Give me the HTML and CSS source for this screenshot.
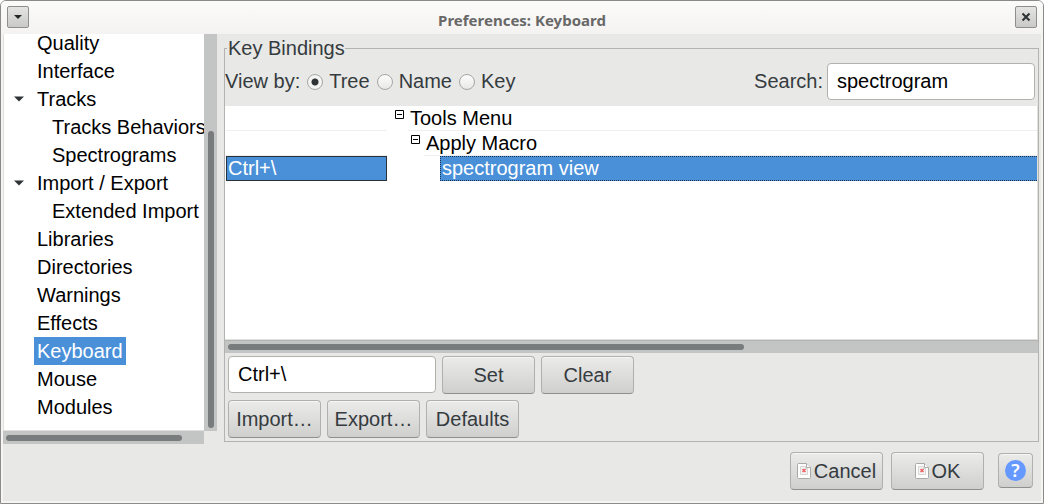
FILE: index.html
```html
<!DOCTYPE html>
<html lang="en">
<head>
<meta charset="utf-8">
<title>Preferences: Keyboard</title>
<link rel="stylesheet" href="styles.css">
</head>
<body>
<div class="window">
  <header class="titlebar">
    <button class="title-button" type="button" aria-label="Window menu">
      <svg width="10" height="6" viewBox="0 0 10 6"><path d="M1 1h8L5 5z" fill="#222828"/></svg>
    </button>
    <h1 class="title">Preferences: Keyboard</h1>
    <button class="title-button" type="button" aria-label="Close">
      <svg width="10" height="10" viewBox="0 0 10 10"><path d="M1.5 1.5l7 7M8.5 1.5l-7 7" stroke="#2e3436" stroke-width="2.1" fill="none"/></svg>
    </button>
  </header>

  <main class="content">
    <nav class="sidebar">
      <ul class="tree">
        <li class="node"><span class="name">Quality</span></li>
        <li class="node"><span class="name">Interface</span></li>
        <li class="node"><svg class="arrow" width="10" height="6" viewBox="0 0 10 6"><path d="M0 .5h10l-5 5z"/></svg><span class="name">Tracks</span></li>
        <li class="node child"><span class="name">Tracks Behaviors</span></li>
        <li class="node child"><span class="name">Spectrograms</span></li>
        <li class="node"><svg class="arrow" width="10" height="6" viewBox="0 0 10 6"><path d="M0 .5h10l-5 5z"/></svg><span class="name">Import / Export</span></li>
        <li class="node child"><span class="name">Extended Import</span></li>
        <li class="node"><span class="name">Libraries</span></li>
        <li class="node"><span class="name">Directories</span></li>
        <li class="node"><span class="name">Warnings</span></li>
        <li class="node"><span class="name">Effects</span></li>
        <li class="node"><span class="name selected">Keyboard</span></li>
        <li class="node"><span class="name">Mouse</span></li>
        <li class="node"><span class="name">Modules</span></li>
      </ul>
      <div class="scroll-v"><div class="thumb"></div></div>
      <div class="scroll-h"><div class="thumb"></div></div>
    </nav>

    <fieldset class="group">
      <legend>Key Bindings</legend>
      <div class="group-body">
        <div class="filters">
          <div class="view-by" role="radiogroup" aria-labelledby="view-by">
            <span id="view-by">View by:</span>
            <label class="option"><input type="radio" name="view" checked>Tree</label>
            <label class="option"><input type="radio" name="view">Name</label>
            <label class="option"><input type="radio" name="view">Key</label>
          </div>
          <label for="search">Search:</label>
          <input class="field search" id="search" type="text" value="spectrogram">
        </div>

        <div class="bindings">
          <table class="grid">
            <tbody>
              <tr>
                <td class="shortcut"></td>
                <td><div class="item level-1"><svg class="toggle" width="9" height="9" viewBox="0 0 9 9"><path d="M.5.5h8v8h-8zM2 4.5h5"/></svg><span class="command">Tools Menu</span></div></td>
              </tr>
              <tr>
                <td class="shortcut"></td>
                <td><div class="item level-2"><svg class="toggle" width="9" height="9" viewBox="0 0 9 9"><path d="M.5.5h8v8h-8zM2 4.5h5"/></svg><span class="command">Apply Macro</span></div></td>
              </tr>
              <tr>
                <td class="shortcut current">Ctrl+\</td>
                <td><div class="item level-3"><span class="command current">spectrogram view</span></div></td>
              </tr>
            </tbody>
          </table>
        </div>
        <div class="scroll-h bindings-scroll"><div class="thumb"></div></div>

        <div class="actions">
          <input class="field binding" type="text" value="Ctrl+\" aria-label="Short cut">
          <button class="button" type="button">Set</button>
          <button class="button" type="button">Clear</button>
        </div>
        <div class="actions">
          <button class="button" type="button">Import…</button>
          <button class="button" type="button">Export…</button>
          <button class="button" type="button">Defaults</button>
        </div>
      </div>
    </fieldset>
  </main>

  <footer class="footer">
    <button class="button" type="button">
      <svg width="14" height="16" viewBox="0 0 14 16"><path d="M1.5.5h8l4 4v10a1 1 0 0 1-1 1h-11a1 1 0 0 1-1-1v-13a1 1 0 0 1 1-1z" fill="#fdfdfd" stroke="#a9aaa8"/><path d="M9.500.5v4h4" fill="#fff" stroke="#a9aaa8"/><path d="M3.500 3.500h5v2h2v6h-7z" fill="#f4f4f4" stroke="#d6d7d5"/><path d="M5.500 6l3 3M8.500 6l-3 3" stroke="#ee6468" stroke-width="1.600"/></svg>Cancel</button>
    <button class="button" type="button">
      <svg width="14" height="16" viewBox="0 0 14 16"><path d="M1.5.5h8l4 4v10a1 1 0 0 1-1 1h-11a1 1 0 0 1-1-1v-13a1 1 0 0 1 1-1z" fill="#fdfdfd" stroke="#a9aaa8"/><path d="M9.500.5v4h4" fill="#fff" stroke="#a9aaa8"/><path d="M3.500 3.500h5v2h2v6h-7z" fill="#f4f4f4" stroke="#d6d7d5"/><path d="M5.500 6l3 3M8.500 6l-3 3" stroke="#ee6468" stroke-width="1.600"/></svg>OK</button>
    <button class="button help" type="button" aria-label="Help"><span class="help-mark">?</span></button>
  </footer>
</div>
</body>
</html>
```
FILE: styles.css
```css
* {
  box-sizing: border-box;
}

body {
  margin: 0;
  background: #fff;
  color: #353b3f;
  font: 20px/28px "Liberation Sans", Arial, sans-serif;
}

button,
input {
  margin: 0;
  color: inherit;
  font: inherit;
}

svg {
  flex: none;
}

.window {
  display: flex;
  flex-direction: column;
  height: 100vh;
  border: 1px solid #8b8b8b;
  border-radius: 6px 6px 0 0;
  background: #f5f4f2;
  overflow: hidden;
}

.titlebar {
  display: flex;
  flex: none;
  align-items: center;
  height: 33px;
  padding: 0 6px;
  background: linear-gradient(#fbfbfa, #f4f3f1);
}

.title {
  flex: 1;
  margin: 0;
  padding-top: 4px;
  color: #686868;
  font: bold 15px/20px "Noto Sans", "Open Sans", sans-serif;
  text-align: center;
}

.title-button {
  display: flex;
  align-items: center;
  justify-content: center;
  width: 22px;
  height: 22px;
  margin-bottom: 1px;
  padding: 0;
  border: 1px solid #8e8e8c;
  border-radius: 2px;
  background: linear-gradient(#e4e4e2, #c9c9c7);
}

.content {
  display: flex;
  flex: 1;
  gap: 7px;
  min-height: 0;
  margin: 0 2px;
  padding-right: 2px;
  background: #e8e8e6;
}

.sidebar {
  display: grid;
  flex: none;
  grid-template: minmax(0, 1fr) 13px / minmax(0, 1fr) 13px;
  width: 214px;
}

.tree {
  display: flex;
  flex-direction: column;
  justify-content: flex-end;
  margin: 0;
  padding: 0 0 9px 30px;
  border: 1px solid #e0e0de;
  border-width: 0 0 1px 1px;
  background: #fff;
  color: #000;
  list-style: none;
  overflow: hidden;
}

.node {
  display: flex;
  flex: none;
  align-items: center;
  white-space: nowrap;
}

.arrow {
  margin: 0 10px 0 -20px;
  fill: #2e3436;
}

.child {
  padding-left: 15px;
}

.name {
  padding: 0 3px;
}

.selected {
  background: #4a90d9;
  color: #fff;
}

.scroll-v {
  display: flex;
  align-items: flex-end;
  padding: 3px 3px 3px 4px;
  background: #c2c5c3;
}

.scroll-h {
  padding: 4px 3px 3px;
  background: #c2c5c3;
}

.thumb {
  width: 90%;
  height: 6px;
  border-radius: 3px;
  background: #797c7c;
}

.scroll-v .thumb {
  width: 6px;
  height: 76%;
}

.group {
  display: flex;
  flex: 1;
  flex-direction: column;
  min-width: 0;
  margin: 0 0 2px;
  padding: 0;
  border: 1px solid #b3b4b2;
}

legend {
  margin-left: 2px;
  padding: 0 0 0 1px;
}

.group-body {
  display: flex;
  flex-direction: column;
  height: 100%;
}

.filters {
  display: flex;
  align-items: center;
  gap: 4px;
  padding: 1px 3px 6px 0;
}

.filters label,
.filters span {
  line-height: 26px;
}

.filters > label,
.view-by {
  padding-bottom: 2px;
}

.view-by {
  display: flex;
  flex: 1;
  align-items: center;
  gap: 7px;
  white-space: nowrap;
}

.option {
  display: flex;
  align-items: center;
  gap: 6px;
}

.option input {
  width: 16px;
  height: 16px;
  margin-top: 2px;
  border: 1px solid #a6a8a5;
  border-radius: 50%;
  background: linear-gradient(#fdfdfd, #e8e8e6);
  appearance: none;
}

.option input:checked {
  background: radial-gradient(circle, #2e3436 3px, #f4f4f3 4px);
}

.field {
  height: 37px;
  padding: 0 9px;
  border: 1px solid #b1b2ac;
  border-radius: 4px;
  background: #fff;
  color: #000;
}

.search,
.binding {
  width: 208px;
}

.bindings {
  flex: 1;
  min-height: 0;
  padding-left: 1px;
  border: 1px solid #e0e0de;
  border-width: 0 1px 1px 0;
  background: #fff;
  overflow: hidden;
}

.grid {
  width: 100%;
  border-collapse: collapse;
  table-layout: fixed;
  color: #000;
  line-height: 24px;
}

.grid td {
  height: 25px;
  padding: 0;
}

.grid .shortcut {
  width: 161px;
  padding: 0 2px;
  box-shadow: inset 0 -1px #efefef;
  vertical-align: top;
}

.grid .shortcut.current {
  background: #4a90d9;
  box-shadow: inset 0 0 0 1px #263238;
  color: #fff;
}

.item {
  display: flex;
  gap: 4px;
  padding-left: 8px;
}

.level-2 {
  padding-left: 24px;
}

.level-3 {
  padding-left: 53px;
}

.toggle {
  margin-top: 4px;
  fill: none;
  stroke: #000;
}

.command {
  flex: 1;
  height: 25px;
  padding-left: 2px;
  box-shadow: inset 0 -1px #efefef;
}

.command.current {
  padding-left: 1px;
  border: 1px dotted #1c3350;
  border-right: 0;
  background: #4a90d9;
  box-shadow: none;
  color: #fff;
  line-height: 22px;
}

.bindings-scroll {
  flex: none;
  border-top: 1px solid #b3b4b2;
  padding-top: 3px;
}

.bindings-scroll .thumb {
  width: 64%;
}

.actions {
  display: flex;
  gap: 6px;
  padding: 3px;
}

.button {
  display: flex;
  align-items: center;
  justify-content: center;
  gap: 3px;
  min-width: 93px;
  height: 38px;
  padding: 0 5px;
  border: 1px solid #b0b1af;
  border-bottom-color: #8e908d;
  border-radius: 4px;
  background: linear-gradient(#ebebea, #cfcfce);
  box-shadow: inset 0 1px #f6f6f5;
}

.footer {
  display: flex;
  flex: none;
  align-items: center;
  justify-content: flex-end;
  gap: 8px;
  margin: 0 2px 2px;
  padding: 8px 8px 11px;
  background: #e8e8e6;
}

.button.help {
  min-width: 0;
  width: 35px;
  height: 35px;
  margin: 0 0 1px 6px;
  padding: 0;
}

.help-mark {
  width: 21px;
  height: 21px;
  border-radius: 50%;
  background: #6699ff;
  color: #fff;
  font: 600 18px/21px "Noto Sans", sans-serif;
}
```
